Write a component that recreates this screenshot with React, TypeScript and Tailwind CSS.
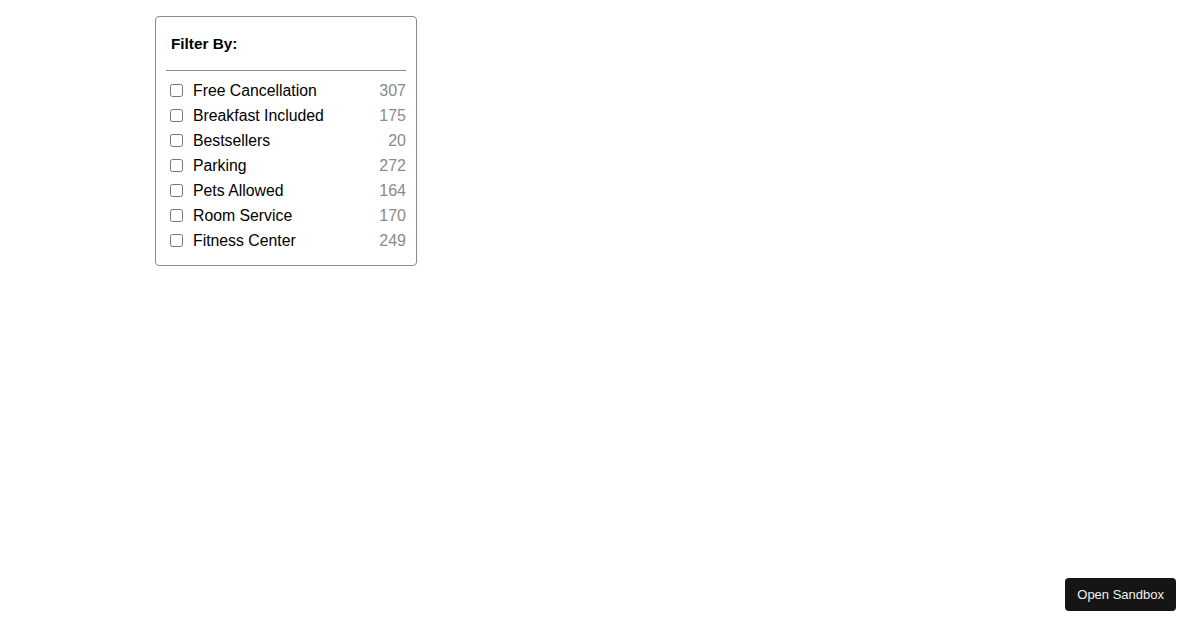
import React from "react";

// Filter panel sample data
const filters = [
  { id: "free-cancellation", label: "Free Cancellation", count: 307 },
  { id: "breakfast", label: "Breakfast Included", count: 175 },
  { id: "bestsellers", label: "Bestsellers", count: 20 },
  { id: "parking", label: "Parking", count: 272 },
  { id: "pets", label: "Pets Allowed", count: 164 },
  { id: "room-service", label: "Room Service", count: 170 },
  { id: "fitness", label: "Fitness Center", count: 249 },
];

export default function App() {
  return (
    <div className="min-h-[630px] bg-white font-['Liberation_Sans',Arial,sans-serif] text-black">
      <div className="pt-[16px] pl-[155px]">
        <div className="w-[262px] rounded-[4px] border border-[#8c8c8c] px-[10px] pb-[12px]">
          <h4 className="pt-[18px] pl-[5px] text-[15.3px] leading-[18px] font-bold">Filter By:</h4>
          <hr className="mt-[17px] mb-[7px] border-t border-[#8c8c8c]" />
          <ul>
            {filters.map((f) => (
              <li key={f.id} className="flex h-[25px] items-center">
                <input id={f.id} type="checkbox" className="ml-[4px] h-[13px] w-[13px]" />
                <label htmlFor={f.id} className="ml-[10px] flex-1 text-[15.8px] leading-[18px]">
                  {f.label}
                </label>
                <span className="text-[16px] leading-[18px] text-[#8a8a8a]">{f.count}</span>
              </li>
            ))}
          </ul>
        </div>
      </div>

      <button className="fixed right-[24px] bottom-[19px] h-[33px] rounded-[4px] bg-[#151515] px-[12px] text-[13px] text-[#f0f0f0]">
        Open Sandbox
      </button>
    </div>
  );
}
